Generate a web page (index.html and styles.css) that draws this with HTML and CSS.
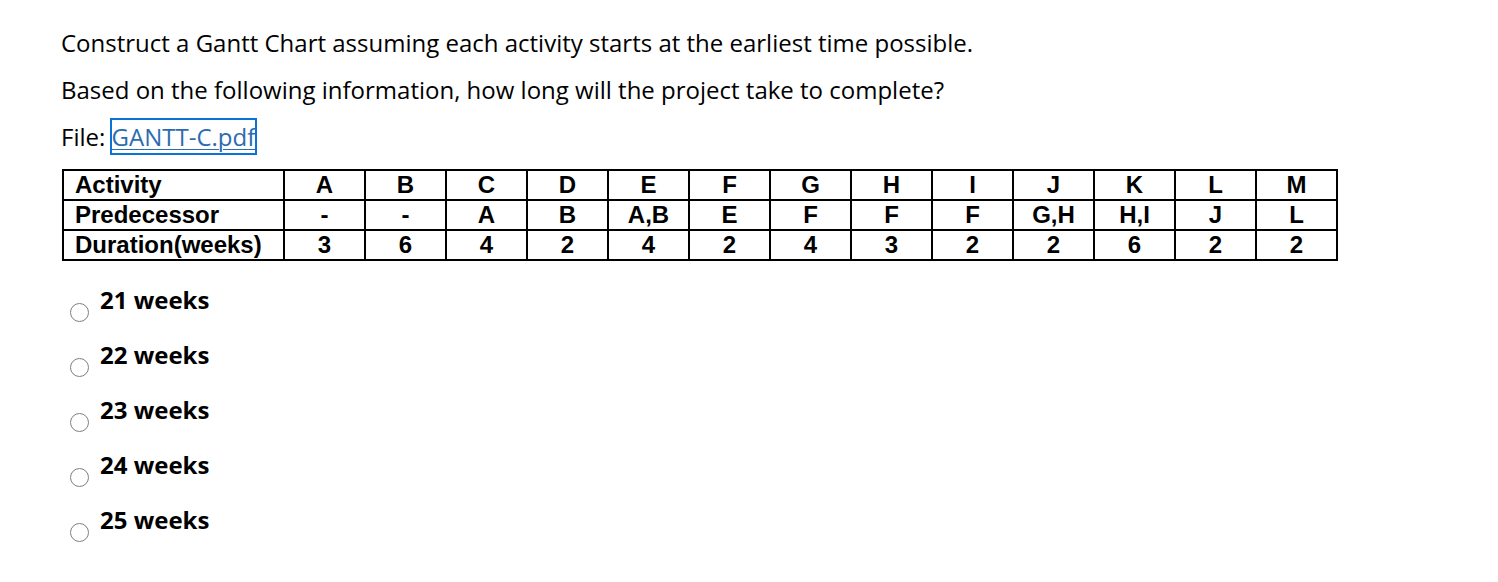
FILE: index.html
```html
<!DOCTYPE html>
<html>
<head>
<meta charset="utf-8">
<link rel="stylesheet" href="styles.css">
</head>
<body>
<div class="question">
  <p class="line">Construct a Gantt Chart assuming each activity starts at the earliest time possible.</p>
  <p class="line">Based on the following information, how long will the project take to complete?</p>
  <p class="line">File: <a class="file" href="#">GANTT-C.pdf</a></p>
  <table class="gantt">
    <tr><td class="head">Activity</td><td>A</td><td>B</td><td>C</td><td>D</td><td>E</td><td>F</td><td>G</td><td>H</td><td>I</td><td>J</td><td>K</td><td>L</td><td>M</td></tr>
    <tr><td class="head">Predecessor</td><td>-</td><td>-</td><td>A</td><td>B</td><td>A,B</td><td>E</td><td>F</td><td>F</td><td>F</td><td>G,H</td><td>H,I</td><td>J</td><td>L</td></tr>
    <tr><td class="head">Duration(weeks)</td><td>3</td><td>6</td><td>4</td><td>2</td><td>4</td><td>2</td><td>4</td><td>3</td><td>2</td><td>2</td><td>6</td><td>2</td><td>2</td></tr>
  </table>
  <div class="options">
    <label class="option"><span class="radio"></span><span class="text">21 weeks</span></label>
    <label class="option"><span class="radio"></span><span class="text">22 weeks</span></label>
    <label class="option"><span class="radio"></span><span class="text">23 weeks</span></label>
    <label class="option"><span class="radio"></span><span class="text">24 weeks</span></label>
    <label class="option"><span class="radio"></span><span class="text">25 weeks</span></label>
  </div>
</div>
</body>
</html>
```
FILE: styles.css
```css
html, body {
  margin: 0;
  padding: 0;
  background: #fff;
}
.question {
  padding: 25px 0 0 61px;
  font-family: "Open Sans", sans-serif;
  font-size: 24px;
  color: #000;
}
.line {
  margin: 0;
  height: 47px;
  line-height: 36px;
}
.file {
  color: #2b6cb0;
  text-decoration: underline;
  text-decoration-thickness: 1px;
  text-underline-offset: 3px;
  outline: 2px solid #0a74d6;
  outline-offset: 0px;
}
.gantt {
  border-collapse: collapse;
  margin-top: 3px;
  margin-left: 1px;
  font-family: "Liberation Sans", Arial, sans-serif;
  font-weight: bold;
  font-size: 24px;
}
.gantt td {
  border: 2px solid #000;
  height: 28px;
  padding: 0;
  width: 79px;
  text-align: center;
  line-height: 28px;
}
.gantt td.head {
  width: 208px;
  text-align: left;
  padding-left: 11px;
}
.options {
  margin-top: 24px;
  margin-left: 9px;
}
.option {
  display: flex;
  align-items: flex-start;
  height: 55px;
  font-weight: bold;
  font-size: 24px;
}
.radio {
  width: 19px;
  height: 19px;
  border: 1px solid #808080;
  border-radius: 50%;
  box-sizing: border-box;
  margin-top: 18px;
  flex: none;
}
.text {
  margin-left: 11px;
  line-height: 30px;
}
```
